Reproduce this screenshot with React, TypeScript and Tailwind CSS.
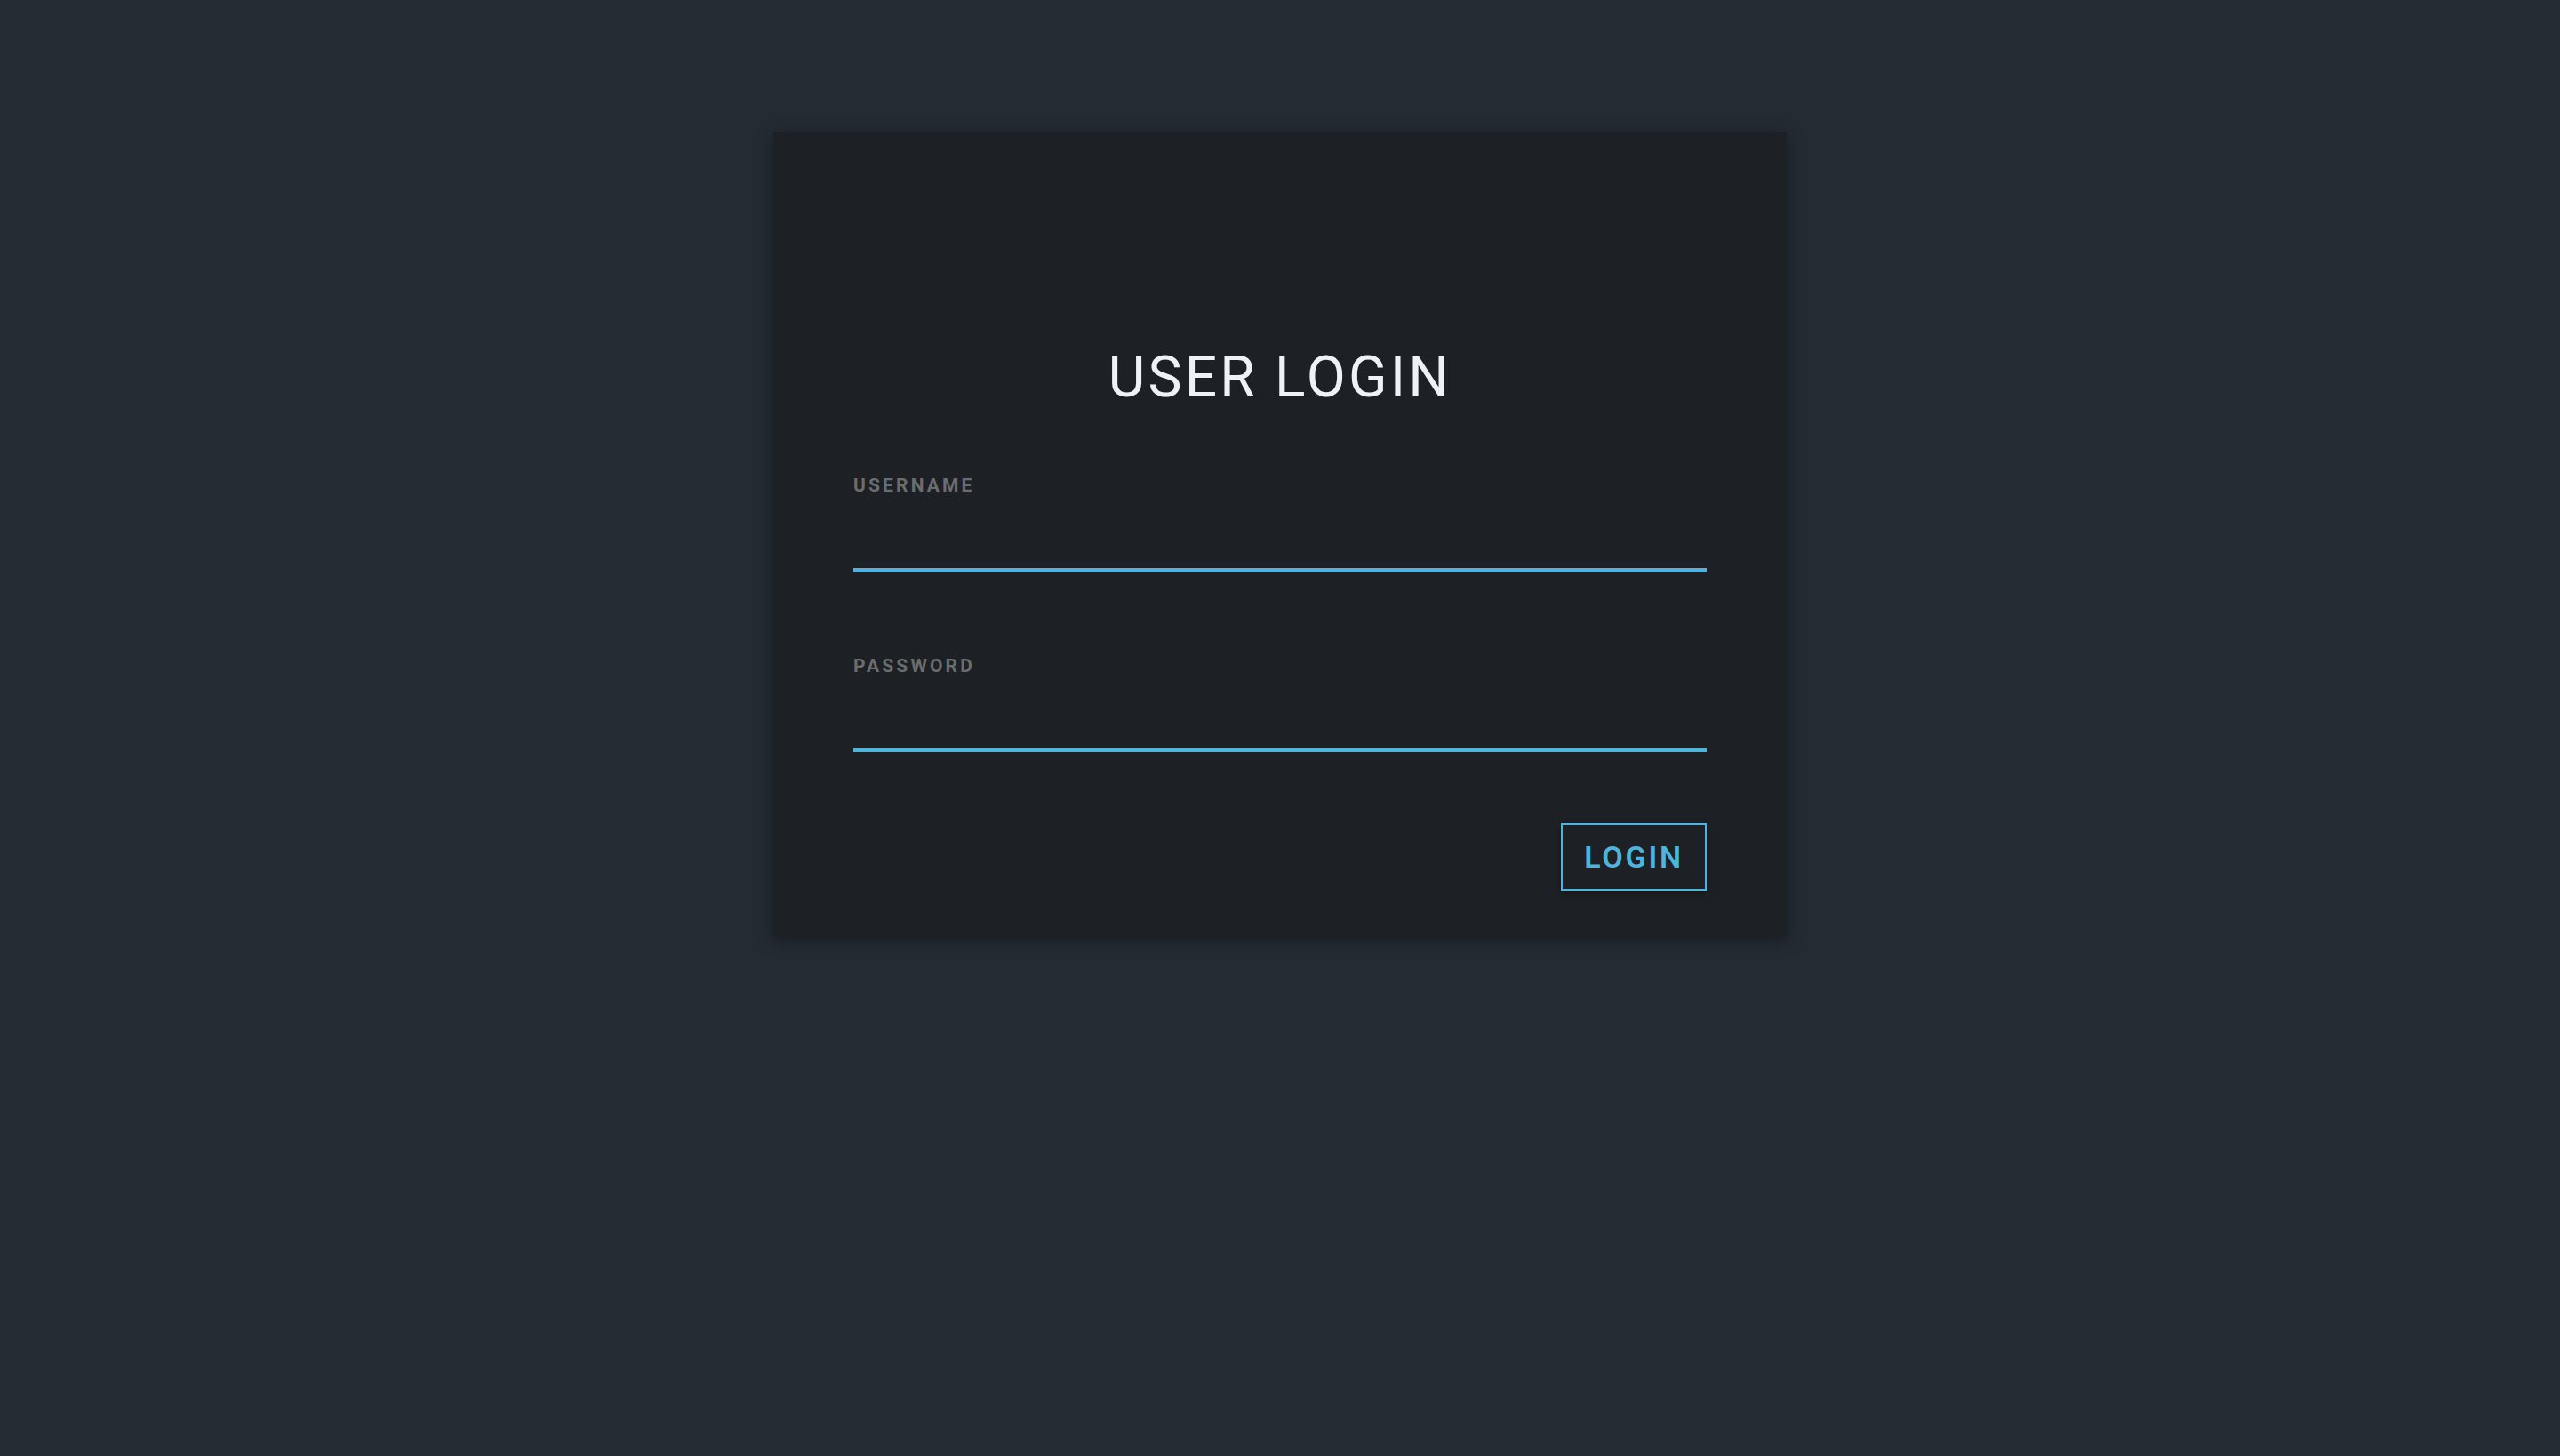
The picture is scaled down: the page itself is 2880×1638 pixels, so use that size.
import React from "react";

export default function App() {
  return (
    <div className="min-h-screen w-full bg-[#242b33] flex justify-center" style={{ fontFamily: "Roboto, 'Noto Sans', sans-serif" }}>
      <div className="mt-[148px] w-[1140px] h-[906px] bg-[#1d2125] shadow-[0_4px_18px_rgba(0,0,0,0.35)] flex flex-col px-[90px] pt-[245px]">
        <h1 className="text-[64px] leading-[64px] font-normal text-[#eef1f6] tracking-[0.05em] text-center">USER LOGIN</h1>
        <label className="mt-[79px] text-[21px] leading-[21px] font-bold text-[#6a6d70] tracking-[0.15em]">USERNAME</label>
        <input type="text" className="h-[86px] w-full bg-transparent border-b-4 border-[#4db5dd] outline-none text-[#eef1f6] text-[28px]" />
        <label className="mt-[96px] text-[21px] leading-[21px] font-bold text-[#6a6d70] tracking-[0.15em]">PASSWORD</label>
        <input type="password" className="h-[86px] w-full bg-transparent border-b-4 border-[#4db5dd] outline-none text-[#eef1f6] text-[28px]" />
        <div className="mt-[80px] flex justify-end">
          <button className="w-[164px] h-[76px] border-2 border-[#4db5dd] text-[#4db5dd] text-[34px] font-semibold tracking-[0.08em] flex items-center justify-center shadow-[0_3px_6px_rgba(0,0,0,0.35)] bg-transparent">
            LOGIN
          </button>
        </div>
      </div>
    </div>
  );
}
